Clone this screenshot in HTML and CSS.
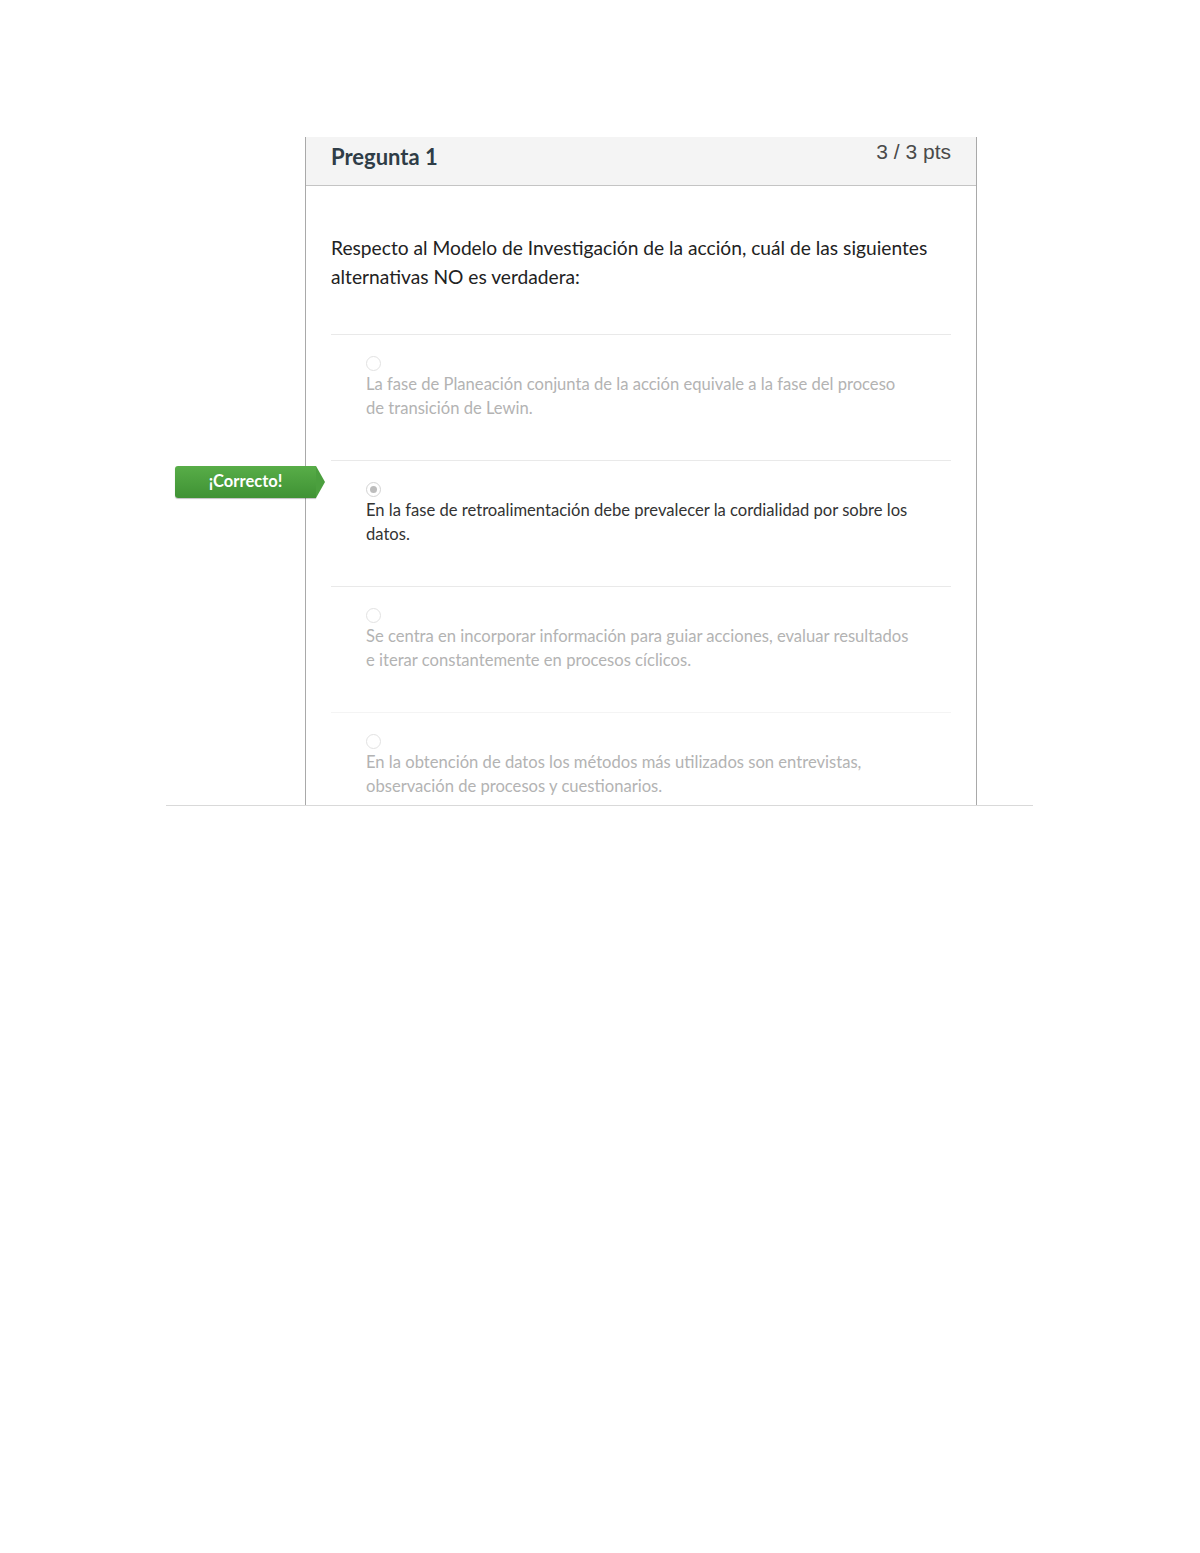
FILE: index.html
```html
<!DOCTYPE html>
<html lang="es">
<head>
<meta charset="utf-8">
<title>Pregunta 1</title>
<link rel="stylesheet" href="styles.css">
</head>
<body>
<div class="page">
  <div class="card">
    <div class="card-header">
      <h2 class="q-title">Pregunta 1</h2>
      <div class="q-points">3 / 3 pts</div>
    </div>
    <div class="card-body">
      <p class="q-text">Respecto al Modelo de Investigación de la acción, cuál de las siguientes<br>alternativas NO es verdadera:</p>
      <ul class="answers">
        <li class="answer">
          <span class="radio"></span>
          <div class="answer-text">La fase de Planeación conjunta de la acción equivale a la fase del proceso<br>de transición de Lewin.</div>
        </li>
        <li class="answer answer-selected">
          <span class="badge">¡Correcto!</span>
          <span class="radio radio-checked"></span>
          <div class="answer-text">En la fase de retroalimentación debe prevalecer la cordialidad por sobre los<br>datos.</div>
        </li>
        <li class="answer">
          <span class="radio"></span>
          <div class="answer-text">Se centra en incorporar información para guiar acciones, evaluar resultados<br>e iterar constantemente en procesos cíclicos.</div>
        </li>
        <li class="answer answer-last">
          <span class="radio"></span>
          <div class="answer-text">En la obtención de datos los métodos más utilizados son entrevistas,<br>observación de procesos y cuestionarios.</div>
        </li>
      </ul>
    </div>
  </div>
</div>
</body>
</html>
```

FILE: styles.css
```css
html, body {
  margin: 0;
  padding: 0;
  background: #ffffff;
}

body {
  font-family: Lato, "Open Sans", "Liberation Sans", sans-serif;
  color: #2d3b45;
}

.page {
  width: 867px;
  margin-left: 166px;
  padding-top: 137px;
  border-bottom: 1px solid #d9d9d9;
}

.card {
  width: 670px;
  margin-left: 139px;
  border-left: 1px solid #a9a9a9;
  border-right: 1px solid #a9a9a9;
}

.card-header {
  height: 48px;
  background: #f4f4f4;
  border-bottom: 1px solid #c4c4c4;
  display: flex;
  justify-content: space-between;
  align-items: flex-start;
  padding: 0 25px;
}

.q-title {
  margin: 0;
  padding-top: 6px;
  font-size: 22px;
  line-height: 28px;
  font-weight: 700;
  color: #2f3d47;
}

.q-points {
  padding-top: 1px;
  font-family: "Liberation Sans", Arial, sans-serif;
  font-size: 21px;
  line-height: 28px;
  color: #4a4a4a;
}

.card-body {
  padding: 0 25px;
}

.q-text {
  margin: 0;
  padding-top: 47px;
  padding-bottom: 43px;
  font-size: 19.2px;
  line-height: 29px;
  color: #222222;
}

.answers {
  list-style: none;
  margin: 0;
  padding: 0;
}

.answer {
  position: relative;
  box-sizing: border-box;
  height: 126px;
  border-top: 1px solid #e9e9e9;
  padding-left: 35px;
  padding-top: 21px;
  font-size: 16.6px;
  line-height: 24px;
  color: #b3b3b3;
}

.answer-last {
  height: 93px;
  border-top-color: #f4f4f4;
}

.answer-selected {
  color: #333333;
}

.radio {
  display: block;
  width: 13px;
  height: 13px;
  border: 1px solid #e2e2e2;
  border-radius: 50%;
  background: #ffffff;
  margin-bottom: 1px;
  position: relative;
}

.radio-checked {
  border-color: #d3d3d3;
}

.radio-checked::after {
  content: "";
  position: absolute;
  left: 3px;
  top: 3px;
  width: 7px;
  height: 7px;
  border-radius: 50%;
  background: #bdbdbd;
}

.answer-text {
  white-space: nowrap;
}

.badge {
  position: absolute;
  left: -156px;
  top: 5px;
  width: 141px;
  height: 32px;
  box-sizing: border-box;
  border-radius: 3px 0 0 3px;
  background: linear-gradient(#58ad48, #3f9234);
  color: #ffffff;
  font-size: 16.5px;
  font-weight: 700;
  line-height: 30px;
  text-align: center;
  box-shadow: 0 1px 1px rgba(0, 0, 0, 0.25);
}

.badge::after {
  content: "";
  position: absolute;
  right: -9px;
  top: 0;
  width: 0;
  height: 0;
  border-top: 16px solid transparent;
  border-bottom: 16px solid transparent;
  border-left: 9px solid #4b9f3e;
}
```
